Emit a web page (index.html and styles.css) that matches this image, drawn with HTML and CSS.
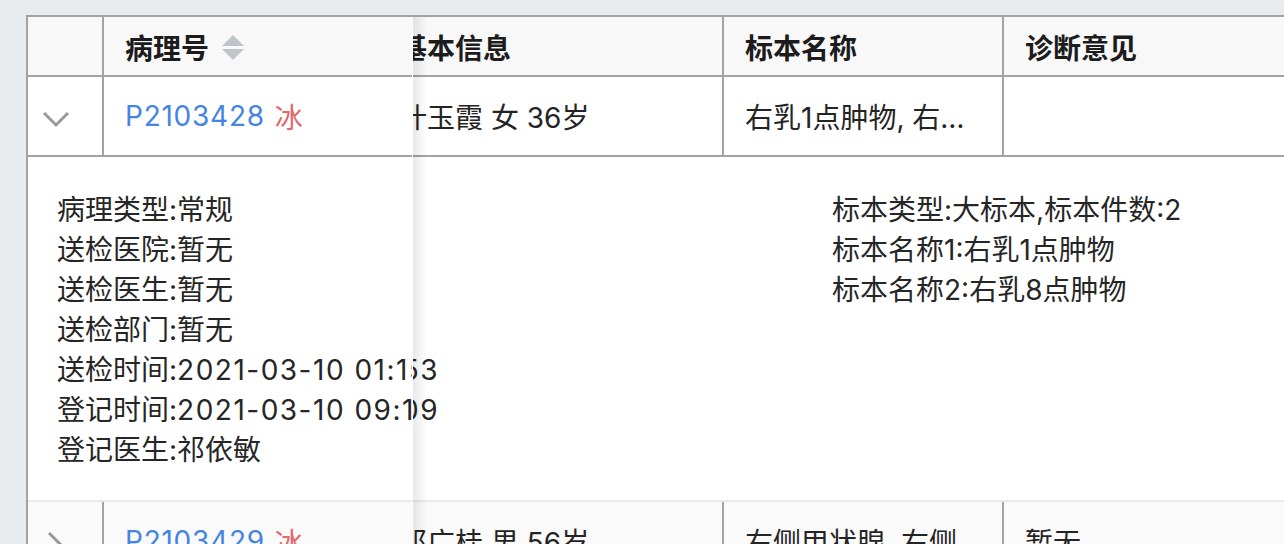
FILE: index.html
```html
<!DOCTYPE html>
<html lang="zh-CN">
<head>
<meta charset="utf-8">
<title>病理列表</title>
<link rel="stylesheet" href="styles.css">
</head>
<body>
<div class="table">
  <div class="scroll">
    <div class="row head">
      <div class="cell c-hidden"></div>
      <div class="cell c-basic">基本信息</div>
      <div class="cell c-spec">标本名称</div>
      <div class="cell c-diag">诊断意见</div>
    </div>
    <div class="row body">
      <div class="cell c-hidden"></div>
      <div class="cell c-basic">叶玉霞 女 36岁</div>
      <div class="cell c-spec"><span class="ell">右乳1点肿物, 右乳8点肿物</span></div>
      <div class="cell c-diag"></div>
    </div>
    <div class="expand">
      <div class="exp-left">
        <div class="shifted">
          <div>病理类型:常规</div>
          <div>送检医院:暂无</div>
          <div>送检医生:暂无</div>
          <div>送检部门:暂无</div>
          <div class="dline">送检时间:<span class="dt">2021-03-10 01:15:53</span></div>
          <div class="dline">登记时间:<span class="dt">2021-03-10 09:10:09</span></div>
          <div>登记医生:祁依敏</div>
        </div>
      </div>
      <div class="exp-right">
        <div>标本类型:大标本,标本件数:2</div>
        <div>标本名称1:右乳1点肿物</div>
        <div>标本名称2:右乳8点肿物</div>
      </div>
    </div>
    <div class="row body hover">
      <div class="cell c-hidden"></div>
      <div class="cell c-basic">邓广桂 男 56岁</div>
      <div class="cell c-spec"><span class="ell">右侧甲状腺, 右侧甲状腺结节</span></div>
      <div class="cell c-diag">暂无</div>
    </div>
  </div>

  <div class="fixed">
    <div class="row head">
      <div class="cell c-exp"></div>
      <div class="cell c-id">病理号<svg class="sort" width="22" height="25" viewBox="0 0 22 25"><polygon points="0,11 11,0 22,11"/><polygon points="0,14 22,14 11,25"/></svg></div>
    </div>
    <div class="row body">
      <div class="cell c-exp">
        <svg class="chev down" width="28" height="18" viewBox="0 0 28 18"><polyline points="2,3 14,15 26,3"/></svg>
      </div>
      <div class="cell c-id"><span class="link">P2103428</span><span class="ice">冰</span></div>
    </div>
    <div class="expand">
      <div class="exp-left">
        <div>病理类型:常规</div>
        <div>送检医院:暂无</div>
        <div>送检医生:暂无</div>
        <div>送检部门:暂无</div>
        <div>送检时间:<span class="dt">2021-03-10 01:15:53</span></div>
        <div>登记时间:<span class="dt">2021-03-10 09:10:09</span></div>
        <div>登记医生:祁依敏</div>
      </div>
    </div>
    <div class="row body hover">
      <div class="cell c-exp">
        <svg class="chev right" width="18" height="28" viewBox="0 0 18 28"><polyline points="3,2 15,14 3,26"/></svg>
      </div>
      <div class="cell c-id"><span class="link">P2103429</span><span class="ice">冰</span></div>
    </div>
  </div>
</div>
</body>
</html>
```

FILE: styles.css
```css
html, body {
  margin: 0;
  padding: 0;
  height: 100%;
  overflow: hidden;
  background: #e9ecef;
}
body {
  font-family: Inter, "Noto Sans CJK SC", sans-serif;
  font-size: 28px;
  color: #242424;
}
.table {
  position: relative;
  margin: 15px 0 0 26px;
  height: 529px;
  overflow: hidden;
  background: #fff;
  border-top: 2px solid #a3a3a3;
  border-left: 2px solid #a3a3a3;
}
.scroll {
  width: 1600px;
}
.row {
  display: flex;
  border-bottom: 2px solid #a3a3a3;
}
.row.head {
  height: 58px;
  background: #f8f8f8;
  font-weight: 600;
  color: #1c1c1c;
}
.row.body {
  height: 78px;
  background: #fff;
}
.row.hover {
  background: #fafafa;
  border-bottom: none;
}
.cell {
  box-sizing: border-box;
  display: flex;
  align-items: center;
  padding: 0 21px;
  white-space: nowrap;
  overflow: hidden;
  border-right: 2px solid #a3a3a3;
}
.head .cell { padding-top: 2px; }
.c-hidden { width: 350px; }
.c-basic { width: 346px; }
.c-spec { width: 280px; padding-right: 14px; }
.c-diag { width: 400px; }
.ell {
  display: block;
  overflow: hidden;
  text-overflow: ellipsis;
  white-space: nowrap;
  max-width: 100%;
}
.dt { letter-spacing: 1.5px; }
.expand {
  box-sizing: border-box;
  height: 345px;
  padding: 33px 0 30px 29px;
  line-height: 40px;
  display: flex;
  background: #fff;
  border-bottom: 2px solid #e9e9e9;
  white-space: nowrap;
  color: #262626;
}
/* the scrolled body: its left block is shifted under the fixed column */
.scroll .exp-left {
  width: 382px;
  flex: none;
  display: flex;
  justify-content: flex-end;
}
.shifted {
  flex: none;
}
.shifted .dline {
  text-align: right;
}
.scroll .exp-right {
  margin-left: 393px;
}

/* fixed left part */
.fixed {
  position: absolute;
  left: 0;
  top: 0;
  width: 384px;
  background: #fff;
  border-right: 1px solid #fff;
}
.fixed::after {
  content: "";
  position: absolute;
  top: 0;
  bottom: 0;
  right: -15px;
  width: 14px;
  background: linear-gradient(to right, rgba(0,0,0,0.09), rgba(0,0,0,0));
}
.fixed .exp-left {
  width: 355px;
  overflow: hidden;
}
.fixed .cell.c-exp {
  width: 76px;
  padding: 0;
}
.fixed .cell.c-id {
  width: 308px;
  border-right: none;
}
.sort {
  margin-left: 13px;
  fill: #c1c4cb;
}
.chev {
  fill: none;
  stroke: #9a9a9a;
  stroke-width: 3;
}
.chev.down { margin: 5px 0 0 14px; }
.chev.right { margin: 8px 0 0 18px; }
.link { color: #4584e2; letter-spacing: 0.75px; }
.ice { color: #e2686a; margin-left: 10px; }
```
